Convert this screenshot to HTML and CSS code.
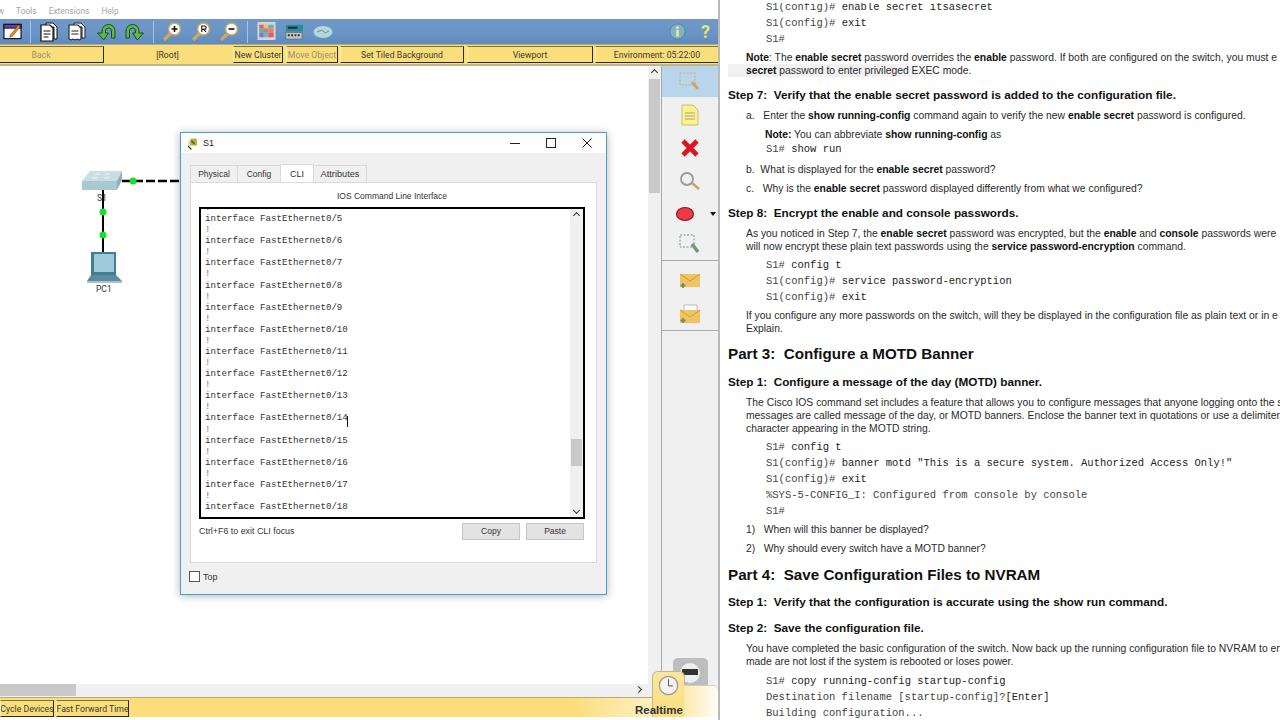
FILE: index.html
```html
<!DOCTYPE html>
<html lang="en">
<head>
  <meta charset="UTF-8">
  <title>Packet Tracer - S1</title>
  <link rel="stylesheet" href="styles.css">
</head>
<body>
<div class="app">
  <div class="menubar">
    <span class="m-view">View</span><span>Tools</span><span>Extensions</span><span>Help</span>
  </div>
  <div class="toolbar">
    <svg class="ic new" viewBox="0 0 20 18"><rect x="1" y="2" width="18" height="15" fill="#fff" stroke="#111" stroke-width="1.2"/><rect x="1" y="2" width="18" height="4" fill="#6a3fa0" stroke="#111" stroke-width="1"/><path d="M8 13l8-10 2 1.5-8 10-3 1z" fill="#e8892c" stroke="#7a3a10" stroke-width=".6"/></svg>
    <i class="sep s1"></i>
    <svg class="ic copy1" viewBox="0 0 20 20"><path d="M7 1h7l4 4v12h-3V5H7z" fill="#fff" stroke="#111"/><path d="M2 3h9l3 3v13H2z" fill="#fff" stroke="#111" stroke-width="1.2"/><path d="M4.500 9h7M4.500 12h7M4.500 15h5" stroke="#111"/></svg>
    <svg class="ic copy2" viewBox="0 0 20 20"><path d="M7 1h7l4 4v11h-3V5H7z" fill="#eee" stroke="#222"/><path d="M2 3h9l3 3v11l-2 1-2-1-2 1-2-1-2 1-2-1z" fill="#fff" stroke="#222" stroke-width="1.1"/><path d="M4.500 9h7M4.500 12h7" stroke="#222"/></svg>
    <svg class="ic undo" viewBox="0 0 20 20"><path d="M5 11V9a6.500 6.500 0 0 1 13 0v7h-3.500V9a3 3 0 0 0-6 0v2h3l-4.750 7L.5 11z" fill="#5cb84a" stroke="#1c4d1a" stroke-width="1"/></svg>
    <svg class="ic redo" viewBox="0 0 20 20"><path transform="translate(20 0) scale(-1 1)" d="M5 11V9a6.500 6.500 0 0 1 13 0v7h-3.500V9a3 3 0 0 0-6 0v2h3l-4.750 7L.5 11z" fill="#5cb84a" stroke="#1c4d1a" stroke-width="1"/></svg>
    <i class="sep s2"></i>
    <svg class="ic z1" viewBox="0 0 20 20"><path d="M9 11l-7 7" stroke="#c9a860" stroke-width="3.400"/><circle cx="12.500" cy="7" r="6" fill="#fff" stroke="#c9a860" stroke-width="1.600"/><path d="M9.500 7h6M12.500 4v6" stroke="#111" stroke-width="1.600"/></svg>
    <svg class="ic z2" viewBox="0 0 20 20"><path d="M9 11l-7 7" stroke="#c9a860" stroke-width="3.400"/><circle cx="12.500" cy="7" r="6" fill="#fff" stroke="#c9a860" stroke-width="1.600"/><path d="M10.800 10V4h2.600a1.600 1.600 0 0 1 0 3.400h-2.600M13 7.400l1.800 2.600" fill="none" stroke="#111" stroke-width="1.100"/></svg>
    <svg class="ic z3" viewBox="0 0 20 20"><path d="M9 11l-7 7" stroke="#c9a860" stroke-width="3.400"/><circle cx="12.500" cy="7" r="6" fill="#fff" stroke="#c9a860" stroke-width="1.600"/><path d="M9.500 7h6" stroke="#111" stroke-width="1.600"/></svg>
    <i class="sep s3"></i>
    <svg class="ic pal" viewBox="0 0 20 20"><rect width="20" height="20" fill="#d9d6d0"/><path d="M2 3h5v4H2z" fill="#e05a7a"/><path d="M7 3h5v4H7z" fill="#e6c84a"/><path d="M12 3h6v4h-6z" fill="#6aa8d8"/><path d="M2 7h5v5H2z" fill="#5ab878"/><path d="M7 7h5v5H7z" fill="#d86ab0"/><path d="M12 7h6v5h-6z" fill="#e08a4a"/><path d="M2 12h5v5H2z" fill="#7a7ad0"/><path d="M7 12h5v5H7z" fill="#58c0c0"/><path d="M12 12h6v5h-6z" fill="#e05a7a"/></svg>
    <svg class="ic dev" viewBox="0 0 20 20"><path d="M1 3h18v7H1z" fill="#2f8a94"/><path d="M3 5h10v2H3z" fill="#123"/><path d="M1 11h17v7H1z" fill="#c4c4c4" stroke="#555" stroke-width=".6"/><path d="M3 14h2M6.500 14h2M10 14h2M13.500 14h2" stroke="#333" stroke-width="2"/></svg>
    <svg class="ic cloud" viewBox="0 0 20 14"><ellipse cx="10" cy="7" rx="9.500" ry="6" fill="#b4d6e2"/><path d="M4 7l5-2 3 3 4-2" stroke="#6a9a70" fill="none"/></svg>
    <svg class="ic info" viewBox="0 0 20 20"><circle cx="10" cy="10" r="9" fill="#7fb3c4" stroke="#4a7f98"/><rect x="8.500" y="8" width="3" height="8" fill="#e6ec9a"/><circle cx="10" cy="5.500" r="1.700" fill="#e6ec9a"/></svg>
    <span class="help">?</span>
  </div>
  <div class="navbar">
    <span class="nav-btn off w-back">Back</span>
    <span class="nav-plain">[Root]</span>
    <span class="nav-btn w-cluster">New Cluster</span>
    <span class="nav-btn off w-move">Move Object</span>
    <span class="nav-btn w-tiled">Set Tiled Background</span>
    <span class="nav-btn w-view">Viewport</span>
    <span class="nav-btn w-env">Environment: 05:22:00</span>
  </div>
  <div class="main">
    <div class="canvas">
      <svg class="topology" width="180" height="240" viewBox="0 0 180 240">
        <path d="M122 115H180" stroke="#000" stroke-width="2.400" stroke-dasharray="9 3"/>
        <path d="M103 124V186" stroke="#000" stroke-width="2"/>
        <path d="M90 105h32l-5 10H82z" fill="#c9dee3"/>
        <path d="M117 115l5-10v9l-5 10z" fill="#8eb0ba"/>
        <path d="M82 115h35v9H82z" fill="#a9c9d2"/>
        <path d="M95 108h5M105 108h5M92 112h5M104 112h5" stroke="#eef6f8"/>
        <circle cx="133" cy="115" r="3.500" fill="#16e02a"/>
        <circle cx="103" cy="146" r="3.500" fill="#16e02a"/>
        <circle cx="103" cy="169" r="3.500" fill="#16e02a"/>
        <path d="M91 186h25v23H91z" fill="#3f7f95"/>
        <path d="M94 188h20v18H94z" fill="#9fcadb"/>
        <path d="M91 209h25l6 6H87z" fill="#5d8b9d"/>
        <path d="M87 215h35v2H87z" fill="#a9c3cc"/>
      </svg>
      <span class="node-label lbl-s1">S1</span>
      <span class="node-label lbl-pc">PC1</span>
    </div>
    <div class="vscroll">
      <i class="arrow up"></i>
      <div class="vthumb"></div>
    </div>
    <div class="tools">
      <div class="tool selected"><svg width="24" height="22" viewBox="0 0 24 22"><rect x="2" y="2" width="15" height="12" fill="none" stroke="#c4b26a" stroke-dasharray="2 1.500"/><path d="M14 11l6 7" stroke="#c9a860" stroke-width="3"/></svg></div>
      <div class="tool h-note"><svg width="18" height="22" viewBox="0 0 18 22"><path d="M1 1h11l5 5v15H1z" fill="#f8f292" stroke="#c8c070"/><path d="M4 9h10M4 12h10M4 15h10" stroke="#aaa46a"/></svg></div>
      <div class="tool h-del"><svg width="20" height="20" viewBox="0 0 20 20"><path d="M3 3l14 14M17 3L3 17" stroke="#e0141c" stroke-width="4.600"/></svg></div>
      <div class="tool h-mag"><svg width="22" height="20" viewBox="0 0 22 20"><circle cx="8" cy="8" r="6" fill="none" stroke="#9a9a9a" stroke-width="1.800"/><path d="M13 12l7 6" stroke="#c9a860" stroke-width="2.600"/></svg></div>
      <div class="tool h-rec"><svg width="20" height="16" viewBox="0 0 20 16"><ellipse cx="10" cy="8" rx="8.500" ry="6.500" fill="#ee3a44" stroke="#8e1820" stroke-width="1.200"/></svg><i class="drop"></i></div>
      <div class="tool h-sel"><svg width="24" height="20" viewBox="0 0 24 20"><rect x="2" y="1" width="14" height="12" fill="none" stroke="#6f9a7a" stroke-dasharray="2 1.500"/><path d="M14 10l6 8" stroke="#6f9a7a" stroke-width="3.400"/></svg></div>
      <div class="tool-sep t1"></div>
      <div class="tool h-mail"><svg width="20" height="14" viewBox="0 0 20 14"><rect width="20" height="13" fill="#f0c460"/><path d="M0 0l10 7 10-7" fill="none" stroke="#c99a3a"/><path d="M3 9v5M0.500 11.500h5" stroke="#7c8a5a" stroke-width="1.800"/></svg></div>
      <div class="tool h-mail2"><svg width="20" height="20" viewBox="0 0 20 20"><path d="M4 1h13v7H4z" fill="#fff" stroke="#bbb"/><rect y="6" width="20" height="13" fill="#f0c460"/><path d="M0 6l10 7 10-7" fill="none" stroke="#c99a3a"/><path d="M3 14v5M0.500 16.500h5" stroke="#7c8a5a" stroke-width="1.800"/></svg></div>
      <div class="tool-sep t2"></div>
    </div>
  </div>
  <div class="hscroll">
    <div class="hthumb"></div>
    <i class="arrow right"></i>
  </div>
  <div class="bottombar">
    <span class="nav-btn w-cycle">Cycle Devices</span>
    <span class="nav-btn w-fast">Fast Forward Time</span>
  </div>
  <div class="sim-icon"><svg width="35" height="32" viewBox="0 0 35 32"><rect width="35" height="32" rx="5" fill="#bdbdbd"/><circle cx="17" cy="15" r="10" fill="#eee"/><rect x="9" y="11" width="16" height="6" fill="#333"/></svg></div>
  <div class="rt-tab"></div>
  <div class="rt-step"></div>
  <svg class="clock" width="21" height="21" viewBox="0 0 24 24"><circle cx="12" cy="12" r="10.500" fill="#f2f2ee" stroke="#9a9a90" stroke-width="1.400"/><path d="M12 5v7.500h5" fill="none" stroke="#444" stroke-width="1"/></svg>
  <span class="rt-label">Realtime</span>

  <div class="window">
    <div class="win-title">
      <svg class="win-ico" width="12" height="13" viewBox="0 0 11 11"><path d="M1 3h8v5H1z" fill="#cfe0c0"/><path d="M3 1h6v6H3z" fill="#c9a830"/><path d="M1 8l3 3" stroke="#222"/><path d="M4 3l3 3" stroke="#2a6a2a" stroke-width="1.500"/></svg>
      <span class="win-name">S1</span>
      <svg class="win-btn min" width="10" height="10" viewBox="0 0 10 10"><path d="M0 5.500h10" stroke="#222"/></svg>
      <svg class="win-btn max" width="10" height="10" viewBox="0 0 10 10"><rect x=".5" y=".5" width="9" height="9" fill="none" stroke="#222"/></svg>
      <svg class="win-btn close" width="10" height="10" viewBox="0 0 10 10"><path d="M.5 .5l9 9M9.500 .5l-9 9" stroke="#222"/></svg>
    </div>
    <div class="tabs">
      <span class="tab t-phys">Physical</span>
      <span class="tab t-conf">Config</span>
      <span class="tab t-cli active">CLI</span>
      <span class="tab t-attr">Attributes</span>
    </div>
    <div class="panel">
      <div class="panel-title">IOS Command Line Interface</div>
      <div class="term">
<pre class="term-text"><b>!</b>
interface FastEthernet0/5
<b>!</b>
interface FastEthernet0/6
<b>!</b>
interface FastEthernet0/7
<b>!</b>
interface FastEthernet0/8
<b>!</b>
interface FastEthernet0/9
<b>!</b>
interface FastEthernet0/10
<b>!</b>
interface FastEthernet0/11
<b>!</b>
interface FastEthernet0/12
<b>!</b>
interface FastEthernet0/13
<b>!</b>
interface FastEthernet0/14
<b>!</b>
interface FastEthernet0/15
<b>!</b>
interface FastEthernet0/16
<b>!</b>
interface FastEthernet0/17
<b>!</b>
interface FastEthernet0/18</pre>
        <div class="term-scroll">
          <i class="arrow up"></i>
          <div class="term-thumb"></div>
          <i class="arrow down"></i>
        </div>
        <span class="ibeam"></span>
      </div>
      <div class="panel-foot">
        <span class="hint">Ctrl+F6 to exit CLI focus</span>
        <span class="btn b-copy">Copy</span>
        <span class="btn">Paste</span>
      </div>
    </div>
    <div class="win-foot"><i class="check"></i><span>Top</span></div>
  </div>
</div>

<div class="doc">
  <div class="cmd l-first">S1(config)# <b>enable secret itsasecret</b></div>
  <div class="cmd l16">S1(config)# <b>exit</b></div>
  <div class="cmd l16">S1#</div>
  <div class="body l18 note-line"><b>Note</b>: The <b>enable secret</b> password overrides the <b>enable</b> password. If both are configured on the switch, you must e</div>
  <div class="body l13 shade"><b>secret</b> password to enter privileged EXEC mode.</div>
  <div class="step l25">Step 7:&nbsp; Verify that the enable secret password is added to the configuration file.</div>
  <div class="body l20 li">a.&nbsp;&nbsp; Enter the <b>show running-config</b> command again to verify the new <b>enable secret</b> password is configured.</div>
  <div class="body l19 sub"><b>Note:</b> You can abbreviate <b>show running-config</b> as</div>
  <div class="cmd l15">S1# <b>show run</b></div>
  <div class="body l20 li">b.&nbsp; What is displayed for the <b>enable secret</b> password?</div>
  <div class="body l19 li">c.&nbsp;&nbsp; Why is the <b>enable secret</b> password displayed differently from what we configured?</div>
  <div class="step l25">Step 8:&nbsp; Encrypt the enable and console passwords.</div>
  <div class="body l20 para">As you noticed in Step 7, the <b>enable secret</b> password was encrypted, but the <b>enable</b> and <b>console</b> passwords were</div>
  <div class="body l13 para">will now encrypt these plain text passwords using the <b>service password-encryption</b> command.</div>
  <div class="cmd l19">S1# <b>config t</b></div>
  <div class="cmd l16">S1(config)# <b>service password-encryption</b></div>
  <div class="cmd l16">S1(config)# <b>exit</b></div>
  <div class="body l18 para">If you configure any more passwords on the switch, will they be displayed in the configuration file as plain text or in e</div>
  <div class="body l13 para">Explain.</div>
  <div class="part l26">Part 3:&nbsp; Configure a MOTD Banner</div>
  <div class="step l28">Step 1:&nbsp; Configure a message of the day (MOTD) banner.</div>
  <div class="body l20 para">The Cisco IOS command set includes a feature that allows you to configure messages that anyone logging onto the s</div>
  <div class="body l13 para">messages are called message of the day, or MOTD banners. Enclose the banner text in quotations or use a delimiter</div>
  <div class="body l13 para">character appearing in the MOTD string.</div>
  <div class="cmd l19">S1# <b>config t</b></div>
  <div class="cmd l16">S1(config)# <b>banner motd "This is a secure system. Authorized Access Only!"</b></div>
  <div class="cmd l16">S1(config)# <b>exit</b></div>
  <div class="cmd l16">%SYS-5-CONFIG_I: Configured from console by console</div>
  <div class="cmd l16">S1#</div>
  <div class="body l18 li">1)&nbsp;&nbsp; When will this banner be displayed?</div>
  <div class="body l19 li">2)&nbsp;&nbsp; Why should every switch have a MOTD banner?</div>
  <div class="part l27">Part 4:&nbsp; Save Configuration Files to NVRAM</div>
  <div class="step l27">Step 1:&nbsp; Verify that the configuration is accurate using the show run command.</div>
  <div class="step l26">Step 2:&nbsp; Save the configuration file.</div>
  <div class="body l20 para">You have completed the basic configuration of the switch. Now back up the running configuration file to NVRAM to en</div>
  <div class="body l13 para">made are not lost if the system is rebooted or loses power.</div>
  <div class="cmd l20">S1# <b>copy running-config startup-config</b></div>
  <div class="cmd l16">Destination filename [startup-config]?<b>[Enter]</b></div>
  <div class="cmd l16">Building configuration...</div>
</div>
</body>
</html>
```

FILE: styles.css
```css
html, body {
  margin: 0;
  height: 100%;
  overflow: hidden;
}
body {
  display: flex;
  width: 1280px;
  height: 720px;
  background: #fff;
  font-family: "Liberation Sans", Arial, sans-serif;
}
.app {
  position: relative;
  display: flex;
  flex-direction: column;
  flex: none;
  width: 720px;
  height: 720px;
  font-family: Roboto, "Liberation Sans", sans-serif;
  font-size: 8.700px;
  color: #222;
  border-right: 2px solid #b9b9b9;
  box-sizing: border-box;
  overflow: hidden;
}

/* top bars */
.menubar {
  display: flex;
  height: 19px;
  align-items: center;
  gap: 12px;
  padding-top: 3px;
  box-sizing: border-box;
  font-size: 8.400px;
  color: #a5a5a5;
  background: #fff;
}
.m-view {
  margin-left: -14px;
}
.toolbar {
  position: relative;
  height: 25px;
  background: linear-gradient(#7099c9, #6a94c6 60%, #5f8abd);
}
.ic {
  position: absolute;
}
.new { left: 3px; top: 3px; width: 19px; height: 18px; }
.copy1 { left: 39px; top: 3px; width: 20px; height: 20px; }
.copy2 { left: 67px; top: 3px; width: 20px; height: 20px; }
.undo { left: 97px; top: 3px; width: 20px; height: 20px; }
.redo { left: 124px; top: 3px; width: 20px; height: 20px; }
.z1 { left: 162px; top: 3px; width: 20px; height: 20px; }
.z2 { left: 191px; top: 3px; width: 20px; height: 20px; }
.z3 { left: 219px; top: 3px; width: 20px; height: 20px; }
.pal { left: 257px; top: 3px; width: 19px; height: 18px; }
.dev { left: 285px; top: 3px; width: 19px; height: 19px; }
.cloud { left: 313px; top: 6px; width: 20px; height: 14px; }
.info { left: 669px; top: 4px; width: 17px; height: 17px; }
.help {
  position: absolute;
  left: 701px;
  top: 2px;
  font-size: 18px;
  font-weight: bold;
  color: #e6e86a;
}
.sep {
  position: absolute;
  top: 2px;
  width: 1px;
  height: 22px;
  background: #a9c3e0;
}
.s1 { left: 30px; }
.s2 { left: 153px; }
.s3 { left: 247px; }

.navbar {
  display: flex;
  height: 22px;
  padding: 1px 0;
  box-sizing: border-box;
  background: #fbde7c;
  border-top: 1px solid #b7ab78;
  border-bottom: 2px solid #bdb68e;
}
.nav-btn {
  display: flex;
  align-items: center;
  justify-content: center;
  box-sizing: border-box;
  flex: none;
  border: 1px solid #2c2a1a;
  border-left-color: #fff2b8;
  border-top-color: #7a7344;
  white-space: nowrap;
  color: #3a3a30;
  overflow: hidden;
}
.nav-btn.off {
  color: #9c9468;
}
.nav-plain {
  display: flex;
  align-items: center;
  justify-content: center;
  width: 127px;
  padding-right: 2px;
  flex: none;
  color: #3a3a30;
}
.w-back { width: 126px; margin-left: -22px; }
.w-cluster { width: 50px; margin-right: 3px; }
.w-move { width: 52px; margin-right: 2px; }
.w-tiled { width: 124px; margin-right: 3px; }
.w-view { width: 126px; margin-right: 2px; }
.w-env { width: 124px; }

/* workspace */
.main {
  display: flex;
  flex: 1;
  min-height: 0;
}
.canvas {
  position: relative;
  flex: 1;
  background: #fff;
}
.topology {
  position: absolute;
  left: 0;
  top: 0;
}
.node-label {
  position: absolute;
  font-size: 8.500px;
  color: #333;
}
.lbl-s1 { left: 97px; top: 127px; }
.lbl-pc { left: 96px; top: 218px; }
.vscroll {
  width: 13px;
  background: #f0f0f0;
  flex: none;
  position: relative;
}
.vthumb {
  position: absolute;
  left: 1px;
  top: 13px;
  width: 11px;
  height: 114px;
  background: #c9c9c9;
}
.tools {
  display: flex;
  flex-direction: column;
  align-items: center;
  width: 57px;
  flex: none;
  background: #f0f0f0;
  border-left: 1px solid #a9a9a9;
  box-sizing: border-box;
}
.tool {
  position: relative;
  display: flex;
  justify-content: center;
  align-items: center;
  width: 100%;
}
.selected {
  height: 31px;
  background: #b9d5ec;
}
.h-note { height: 36px; }
.h-del { height: 29px; }
.h-mag { height: 38px; }
.h-rec { height: 28px; padding-right: 10px; box-sizing: border-box; }
.h-sel { height: 32px; }
.h-mail { height: 38px; }
.h-mail2 { height: 28px; }
.drop {
  position: absolute;
  right: 2px;
  top: 12px;
  border: 3px solid transparent;
  border-top: 4px solid #111;
  border-bottom: none;
}
.tool-sep {
  width: 100%;
  height: 1px;
  background: #aaa;
  margin-bottom: 1px;
}
.t2 { margin-top: 2px; }
.hscroll {
  position: relative;
  height: 13px;
  background: #f0f0f0;
}
.hthumb {
  width: 76px;
  height: 12px;
  background: #c9c9c9;
}
.bottombar {
  display: flex;
  gap: 2px;
  height: 23px;
  padding-top: 2px;
  box-sizing: border-box;
  background: linear-gradient(90deg, #fbde7c 80%, #fffdf2 98%);
  border-top: 1px solid #b7ab78;
  border-bottom: 3px solid #fff;
}
.w-cycle { width: 54px; }
.w-fast { width: 73px; }
.sim-icon {
  position: absolute;
  left: 673px;
  top: 658px;
}
.rt-tab {
  position: absolute;
  left: 652px;
  top: 671px;
  width: 33px;
  height: 46px;
  background: linear-gradient(#fbe6a0, #fbde7c);
  border: 1px solid #bfb78e;
  border-bottom: none;
  border-radius: 6px 6px 0 0;
  box-sizing: border-box;
}
.rt-step {
  position: absolute;
  left: 684px;
  top: 685px;
  width: 34px;
  height: 32px;
  background: linear-gradient(90deg, #fce9ae, #fffdf6);
  border-radius: 0 5px 0 0;
  border-top: 1px solid #cfcfc6;
  box-sizing: border-box;
}
.clock {
  position: absolute;
  left: 658px;
  top: 675px;
}
.rt-label {
  position: absolute;
  left: 635px;
  top: 704px;
  font-family: "Liberation Sans", sans-serif;
  font-size: 11.500px;
  font-weight: bold;
  color: #333;
}

/* device window */
.window {
  position: absolute;
  left: 180px;
  top: 132px;
  display: flex;
  flex-direction: column;
  width: 427px;
  height: 463px;
  box-sizing: border-box;
  font-family: "Liberation Sans", sans-serif;
  background: #f0f0f0;
  border: 1px solid #4a9fd2;
  box-shadow: 0 1px 8px rgba(0, 0, 0, 0.3);
}
.win-title {
  position: relative;
  display: flex;
  align-items: center;
  height: 20px;
  background: #fff;
  flex: none;
}
.win-ico {
  margin-left: 6px;
}
.win-name {
  margin-left: 4px;
  font-size: 9px;
}
.win-btn {
  position: absolute;
  top: 5px;
}
.min { left: 329px; }
.max { left: 365px; }
.close { left: 401px; }
.tabs {
  display: flex;
  height: 29px;
  padding: 11px 0 0 9px;
  box-sizing: border-box;
  flex: none;
}
.tab {
  display: flex;
  align-items: center;
  justify-content: center;
  height: 17px;
  margin-top: 1px;
  box-sizing: border-box;
  background: #f0f0f0;
  border: 1px solid #d9d9d9;
  border-bottom: none;
  margin-right: -1px;
  font-size: 8.500px;
  color: #333;
}
.tab.active {
  height: 18px;
  margin-top: 0;
  background: #fff;
  position: relative;
  z-index: 1;
}
.t-phys { width: 48px; }
.t-conf { width: 44px; }
.t-cli { width: 34px; font-size: 9px; }
.t-attr { width: 54px; font-size: 9.200px; }
.panel {
  display: flex;
  flex-direction: column;
  margin: 0 9px;
  height: 381px;
  padding: 0 11px 0 8px;
  box-sizing: border-box;
  background: #fff;
  border: 1px solid #d9d9d9;
  flex: none;
}
.panel-title {
  height: 24px;
  line-height: 26px;
  text-align: center;
  font-size: 8.500px;
  color: #333;
}
.term {
  position: relative;
  display: flex;
  height: 312px;
  box-sizing: border-box;
  border: 2px solid #000;
  overflow: hidden;
}
.term-text {
  flex: 1;
  margin: -7px 0 0;
  padding: 0 0 0 4px;
  font-family: "Liberation Mono", "Courier New", monospace;
  font-size: 9.170px;
  line-height: 11.080px;
  color: #333;
}
.term-text b {
  font-weight: normal;
  color: #a0507a;
}
.term-scroll {
  position: relative;
  width: 13px;
  flex: none;
  background: #f0f0f0;
}
.term-thumb {
  position: absolute;
  left: 1px;
  top: 230px;
  width: 11px;
  height: 27px;
  background: #c9c9c9;
}
.arrow {
  position: absolute;
  left: 4px;
  width: 4px;
  height: 4px;
  border-left: 1.500px solid #333;
  border-top: 1.500px solid #333;
  transform: rotate(45deg);
}
.arrow.up { top: 4px; }
.arrow.down { bottom: 4px; transform: rotate(225deg); }
.arrow.right { left: 636px; top: 3px; transform: rotate(135deg); }
.ibeam {
  position: absolute;
  left: 146px;
  top: 207px;
  width: 1px;
  height: 11px;
  background: #111;
}
.panel-foot {
  display: flex;
  align-items: center;
  margin: 2px 1px 0 0;
  height: 20px;
}
.hint {
  flex: 1;
  font-size: 8.900px;
  color: #333;
}
.btn {
  display: flex;
  align-items: center;
  justify-content: center;
  width: 58px;
  height: 17px;
  font-size: 8.500px;
  color: #333;
  background: #e3e3e3;
  border: 1px solid #c6c6c6;
  box-sizing: border-box;
}
.b-copy { margin-right: 6px; }
.win-foot {
  display: flex;
  align-items: center;
  gap: 3px;
  padding: 0 0 4px 8px;
  flex: 1;
  font-size: 9px;
  color: #333;
}
.check {
  width: 9px;
  height: 9px;
  background: #fff;
  border: 1px solid #555;
}

/* lab document */
.doc {
  flex: 1;
  min-width: 0;
  overflow: hidden;
  padding-left: 8px;
  border-top: 3px solid #fff;
  font-size: 10.350px;
  line-height: 13px;
  color: #2a2a2a;
  white-space: nowrap;
}
.cmd {
  margin-left: 38px;
  font-family: "Liberation Mono", "Courier New", monospace;
  font-size: 10.500px;
  color: #444;
}
.cmd b {
  font-weight: normal;
  color: #222;
}
.body b {
  color: #111;
}
.step {
  font-size: 11.750px;
  line-height: 11px;
  padding-bottom: 2px;
  font-weight: bold;
  color: #111;
}
.part {
  font-size: 15.200px;
  line-height: 11px;
  padding-bottom: 2px;
  font-weight: bold;
  color: #111;
}
.para, .note-line, .li {
  margin-left: 18px;
}
.sub {
  margin-left: 37px;
}
.shade {
  width: 223px;
  padding-left: 18px;
  background: linear-gradient(90deg, #f1f1f1 70%, #fff);
}
.l-first { margin-top: -2px; }
.l13 { margin-top: 0; }
.l15 { margin-top: 2px; }
.l16 { margin-top: 3px; }
.l18 { margin-top: 5px; }
.l19 { margin-top: 6px; }
.l20 { margin-top: 7px; }
.l25 { margin-top: 12px; }
.l26 { margin-top: 13px; }
.l27 { margin-top: 14px; }
.l28 { margin-top: 15px; }
```
